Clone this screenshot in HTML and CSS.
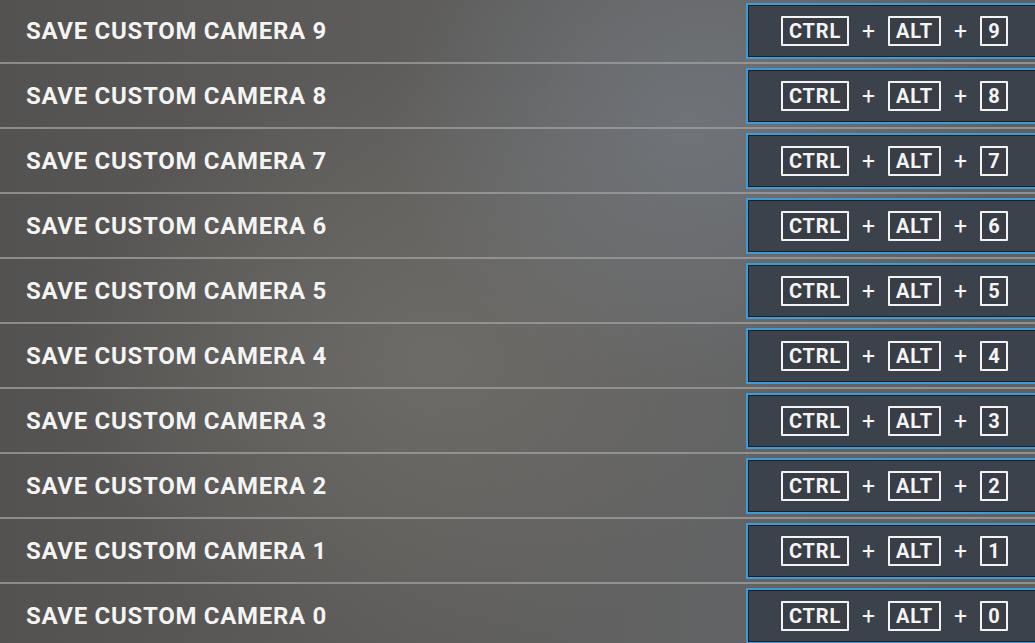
FILE: index.html
```html
<!DOCTYPE html>
<html>
<head>
<meta charset="utf-8">
<link rel="stylesheet" href="styles.css">
</head>
<body>
<div class="list">
  <div class="row"><div class="label">SAVE CUSTOM CAMERA 9</div><div class="binding"><span class="key">CTRL</span><span class="plus">+</span><span class="key">ALT</span><span class="plus">+</span><span class="key num">9</span></div></div>
  <div class="row"><div class="label">SAVE CUSTOM CAMERA 8</div><div class="binding"><span class="key">CTRL</span><span class="plus">+</span><span class="key">ALT</span><span class="plus">+</span><span class="key num">8</span></div></div>
  <div class="row"><div class="label">SAVE CUSTOM CAMERA 7</div><div class="binding"><span class="key">CTRL</span><span class="plus">+</span><span class="key">ALT</span><span class="plus">+</span><span class="key num">7</span></div></div>
  <div class="row"><div class="label">SAVE CUSTOM CAMERA 6</div><div class="binding"><span class="key">CTRL</span><span class="plus">+</span><span class="key">ALT</span><span class="plus">+</span><span class="key num">6</span></div></div>
  <div class="row"><div class="label">SAVE CUSTOM CAMERA 5</div><div class="binding"><span class="key">CTRL</span><span class="plus">+</span><span class="key">ALT</span><span class="plus">+</span><span class="key num">5</span></div></div>
  <div class="row"><div class="label">SAVE CUSTOM CAMERA 4</div><div class="binding"><span class="key">CTRL</span><span class="plus">+</span><span class="key">ALT</span><span class="plus">+</span><span class="key num">4</span></div></div>
  <div class="row"><div class="label">SAVE CUSTOM CAMERA 3</div><div class="binding"><span class="key">CTRL</span><span class="plus">+</span><span class="key">ALT</span><span class="plus">+</span><span class="key num">3</span></div></div>
  <div class="row"><div class="label">SAVE CUSTOM CAMERA 2</div><div class="binding"><span class="key">CTRL</span><span class="plus">+</span><span class="key">ALT</span><span class="plus">+</span><span class="key num">2</span></div></div>
  <div class="row"><div class="label">SAVE CUSTOM CAMERA 1</div><div class="binding"><span class="key">CTRL</span><span class="plus">+</span><span class="key">ALT</span><span class="plus">+</span><span class="key num">1</span></div></div>
  <div class="row"><div class="label">SAVE CUSTOM CAMERA 0</div><div class="binding"><span class="key">CTRL</span><span class="plus">+</span><span class="key">ALT</span><span class="plus">+</span><span class="key num">0</span></div></div>
</div>
</body>
</html>
```

FILE: styles.css
```css
html, body {
  margin: 0;
  padding: 0;
  width: 1035px;
  height: 643px;
  overflow: hidden;
}
body {
  font-family: Roboto, "Liberation Sans", sans-serif;
  color: #f4f4f4;
  background-color: #5d5c5a;
  background-image:
    radial-gradient(ellipse 300px 260px at 690px 130px, rgba(118,123,130,0.7), rgba(118,123,130,0) 100%),
    radial-gradient(ellipse 360px 300px at 430px 360px, rgba(116,113,108,0.7), rgba(116,113,108,0) 100%),
    linear-gradient(90deg, #545250 0%, #5e5d5b 40%, #626364 70%, #5e5f61 100%);
}
.list {
  display: flex;
  flex-direction: column;
  margin-top: -1px;
}
.row {
  height: 63px;
  border-bottom: 2px solid rgba(160,160,160,0.75);
  display: flex;
  align-items: center;
}
.label {
  padding-left: 26px;
  font-size: 24px;
  font-weight: 700;
  letter-spacing: 0.7px;
  flex: 1;
  text-shadow: 0 0 1px rgba(0,0,0,0.2);
}
.binding {
  width: 320px;
  margin-right: -31px;
  height: 56px;
  margin-top: 1px;
  box-sizing: border-box;
  background: #3c424b;
  border: 2px solid #3f9bd6;
  box-shadow: inset 0 0 0 1px #1b2028;
  display: flex;
  align-items: center;
  padding-left: 33px;
}
.key {
  height: 30px;
  box-sizing: border-box;
  border: 2px solid #f4f4f4;
  border-radius: 1px;
  background: #383d46;
  display: flex;
  align-items: center;
  justify-content: center;
  font-size: 20px;
  font-weight: 700;
  letter-spacing: 0.8px;
  padding: 0 6px 0 6px;
}
.key.num {
  width: 28px;
  padding: 0;
  letter-spacing: 0;
}
.plus {
  font-size: 23px;
  font-weight: 400;
  margin: 0 13px;
  line-height: 1;
}
```
